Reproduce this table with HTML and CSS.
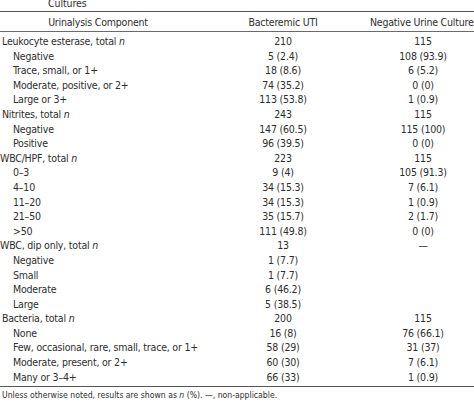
FILE: index.html
```html
<!DOCTYPE html>
<html lang="en">
<head>
<meta charset="utf-8">
<title>Urinalysis table</title>
<link rel="stylesheet" href="styles.css">
</head>
<body>
<div class="page">
  <p class="title">Cultures</p>
  <table class="tbl">
    <colgroup>
      <col class="c1"><col class="c2"><col class="c3">
    </colgroup>
    <thead>
      <tr><th>Urinalysis Component</th><th>Bacteremic UTI</th><th>Negative Urine Cultures</th></tr>
    </thead>
    <tbody>
      <tr class="first"><td>Leukocyte esterase, total <i>n</i></td><td>210</td><td>115</td></tr>
      <tr><td class="sub">Negative</td><td>5 (2.4)</td><td>108 (93.9)</td></tr>
      <tr><td class="sub">Trace, small, or 1+</td><td>18 (8.6)</td><td>6 (5.2)</td></tr>
      <tr><td class="sub">Moderate, positive, or 2+</td><td>74 (35.2)</td><td>0 (0)</td></tr>
      <tr><td class="sub">Large or 3+</td><td>113 (53.8)</td><td>1 (0.9)</td></tr>
      <tr><td>Nitrites, total <i>n</i></td><td>243</td><td>115</td></tr>
      <tr><td class="sub">Negative</td><td>147 (60.5)</td><td>115 (100)</td></tr>
      <tr><td class="sub">Positive</td><td>96 (39.5)</td><td>0 (0)</td></tr>
      <tr><td class="cut">WBC/HPF, total <i>n</i></td><td>223</td><td>115</td></tr>
      <tr><td class="sub">0–3</td><td>9 (4)</td><td>105 (91.3)</td></tr>
      <tr><td class="sub">4–10</td><td>34 (15.3)</td><td>7 (6.1)</td></tr>
      <tr><td class="sub">11–20</td><td>34 (15.3)</td><td>1 (0.9)</td></tr>
      <tr><td class="sub">21–50</td><td>35 (15.7)</td><td>2 (1.7)</td></tr>
      <tr><td class="sub">&gt;50</td><td>111 (49.8)</td><td>0 (0)</td></tr>
      <tr><td class="cut">WBC, dip only, total <i>n</i></td><td>13</td><td>—</td></tr>
      <tr><td class="sub">Negative</td><td>1 (7.7)</td><td></td></tr>
      <tr><td class="sub">Small</td><td>1 (7.7)</td><td></td></tr>
      <tr><td class="sub">Moderate</td><td>6 (46.2)</td><td></td></tr>
      <tr><td class="sub">Large</td><td>5 (38.5)</td><td></td></tr>
      <tr><td>Bacteria, total <i>n</i></td><td>200</td><td>115</td></tr>
      <tr><td class="sub">None</td><td>16 (8)</td><td>76 (66.1)</td></tr>
      <tr><td class="sub">Few, occasional, rare, small, trace, or 1+</td><td>58 (29)</td><td>31 (37)</td></tr>
      <tr><td class="sub">Moderate, present, or 2+</td><td>60 (30)</td><td>7 (6.1)</td></tr>
      <tr class="last"><td class="sub">Many or 3–4+</td><td>66 (33)</td><td>1 (0.9)</td></tr>
    </tbody>
  </table>
  <p class="note">Unless otherwise noted, results are shown as <i>n</i> (%). —, non-applicable.</p>
</div>
</body>
</html>
```

FILE: styles.css
```css
html, body {
  margin: 0;
  padding: 0;
  background: #ffffff;
}

body {
  width: 474px;
  height: 402px;
  overflow: hidden;
  font-family: "DejaVu Sans Condensed", "Liberation Sans", sans-serif;
  color: #2e2e2e;
}

.page {
  width: 476px;
}

.title {
  margin: -5px 0 0 48px;
  font-size: 10.5px;
  line-height: 16px;
  letter-spacing: -0.1px;
}

.tbl {
  width: 476px;
  table-layout: fixed;
  border-collapse: collapse;
  font-size: 10.5px;
  letter-spacing: -0.2px;
  border-top: 1.5px solid #555555;
  border-bottom: 1.5px solid #555555;
}

.c1 { width: 196px; }
.c2 { width: 174px; }
.c3 { width: 106px; }

.tbl th {
  font-weight: normal;
  height: 19px;
  padding: 0;
  text-align: center;
  white-space: nowrap;
  border-bottom: 1px solid #6a6a6a;
}

.tbl td {
  padding: 0;
  height: 14.6px;
  line-height: 14.6px;
  text-align: center;
  white-space: nowrap;
}

.tbl td:first-child {
  text-align: left;
  padding-left: 2px;
}

.tbl td.sub {
  padding-left: 13px;
}

.tbl td.cut {
  padding-left: 0;
}

.tbl tr.first td {
  padding-top: 2px;
}

.tbl tr.last td {
  padding-bottom: 2px;
}

.tbl i, .note i {
  font-style: italic;
}

.note {
  margin: 1px 0 0 2px;
  font-size: 8.6px;
  line-height: 14px;
  white-space: nowrap;
}
```
